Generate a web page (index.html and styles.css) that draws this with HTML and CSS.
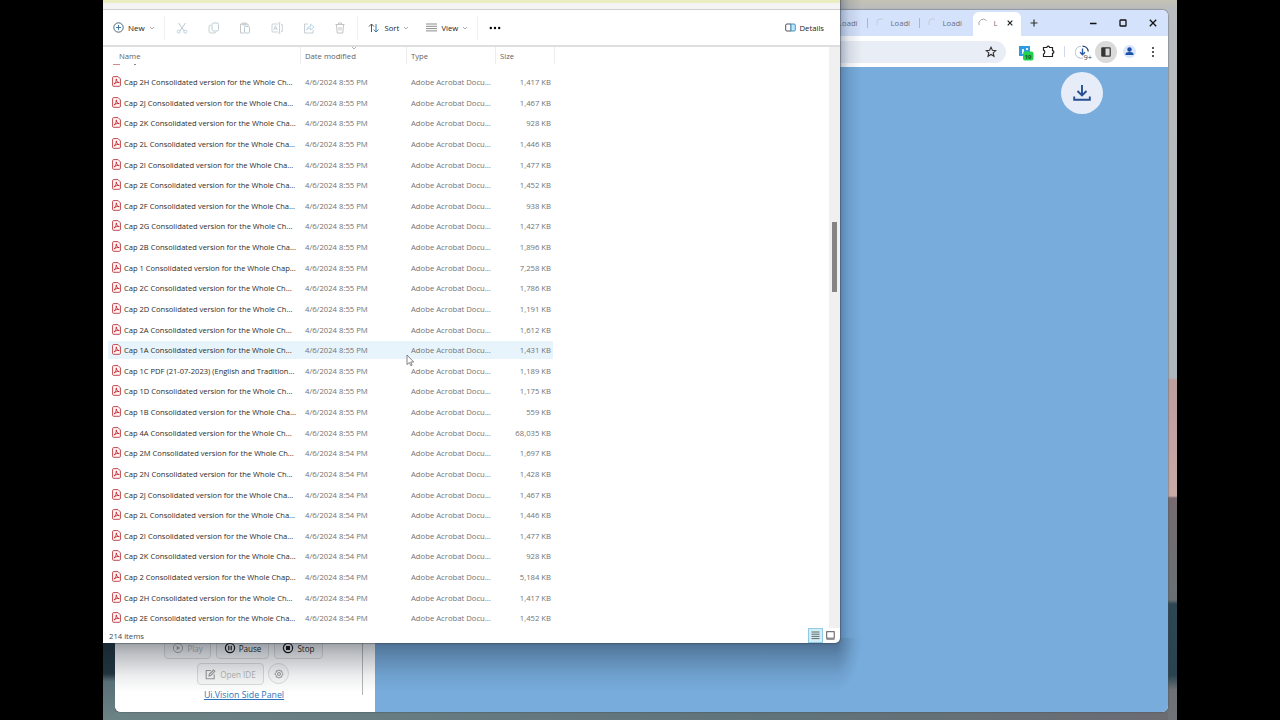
FILE: index.html
```html
<!DOCTYPE html>
<html lang="en">
<head>
  <meta charset="utf-8">
  <title>Downloads</title>
  <link rel="stylesheet" href="styles.css">
</head>
<body>
<svg class="defs" width="0" height="0">
  <symbol id="pdf" viewBox="0 0 9 11">
    <path d="M1.6.6h4.5L8.4 2.9v6.4q0 1-1 1H1.6q-1 0-1-1V1.6q0-1 1-1z" fill="#fff5f5" stroke="#bd4a50"/>
    <path d="M2.2 8C3.6 6.6 4.4 4.6 4.3 2.9 4.5 5 5.4 6.4 7.2 6.6 5.2 6.2 3.6 6.8 2.2 8z" fill="none" stroke="#c3242c" stroke-width=".9"/>
  </symbol>
  <symbol id="chev" viewBox="0 0 6 4"><path d="M1 1l2 2 2-2" fill="none" stroke="#999" stroke-width=".8"/></symbol>
  <symbol id="spin" viewBox="0 0 10 10"><path d="M1 7V4q0-3 3-3h3" fill="none" stroke="#c3cbdc"/></symbol>
</svg>
<div class="desktop">
  <div class="browser">
    <div class="tabs">
      <div class="tab first"><span>Loadi</span></div>
      <div class="tab"><svg width="10" height="10"><use href="#spin"/></svg><span>Loadi</span></div>
      <div class="tab"><svg width="10" height="10"><use href="#spin"/></svg><span>Loadi</span></div>
      <div class="tab active">
        <svg width="10" height="10" viewBox="0 0 10 10"><path d="M1 7A4.5 4.5 0 0 1 8.500 2.500" fill="none" stroke="#aaa"/></svg>
        <span>L</span>
        <svg class="close" width="6" height="6" viewBox="0 0 6 6"><path d="M.7.7l4.600 4.600M5.300.7L.7 5.300" stroke="#222" stroke-width="1.200"/></svg>
      </div>
      <svg class="plus" width="8" height="8" viewBox="0 0 8 8"><path d="M4 .5v7M.5 4h7" stroke="#333" stroke-width="1.200"/></svg>
      <div class="winctl">
        <svg width="8" height="8" viewBox="0 0 8 8"><path d="M1 4.500h6.500" stroke="#111" stroke-width="1.300"/></svg>
        <svg width="8" height="8" viewBox="0 0 8 8"><rect x="1" y="1" width="6" height="6" rx=".6" fill="none" stroke="#111" stroke-width="1.300"/></svg>
        <svg width="8" height="8" viewBox="0 0 8 8"><path d="M.8.8l6.400 6.400M7.200.8L.8 7.200" stroke="#111" stroke-width="1.300"/></svg>
      </div>
    </div>
    <div class="toolbar">
      <div class="omnibox">
        <svg width="12" height="12" viewBox="0 0 12 12"><path d="M6 1.200l1.400 3.100 3.400.3-2.600 2.300.8 3.400L6 8.500l-3 1.800.8-3.400L1.200 4.600l3.400-.3z" fill="none" stroke="#333" stroke-width="1.100"/></svg>
      </div>
      <svg class="ext" width="16" height="16" viewBox="0 0 16 16"><path d="M1 1h11v7H7v3H1z" fill="#2d9be3"/><path d="M4 4h2v5H4zM8 3h2v2H8z" fill="#e4f4ff"/><rect x="5" y="6.500" width="10.500" height="9" rx="2" fill="#20d34c"/><text x="6.700" y="13.500">19</text></svg>
      <svg class="puzzle" width="13" height="13" viewBox="0 0 13 13"><path d="M1.500 2.500h3.300q.2-1.300 1.400-1.300t1.400 1.300h2.900v3.100q1.400.1 1.400 1.400t-1.400 1.400v3.100h-9V9q1.300-.3 1.300-1.900T1.500 5.200z" fill="none" stroke="#222" stroke-width="1.200"/></svg>
      <i class="vline"></i>
      <svg class="dl" width="18" height="16" viewBox="0 0 18 16"><path d="M7.500 1.200a6 6 0 0 1 5.800 5.300" fill="none" stroke="#1c3d78" stroke-width="1.300"/><path d="M6 1.300A6 6 0 1 0 8 13" fill="none" stroke="#b5bfd0"/><path d="M7.500 3.500v6M5 7.200l2.500 2.500L10 7.200" fill="none" stroke="#2a5ba8" stroke-width="1.400"/><text x="8.500" y="14.800">9+</text></svg>
      <div class="side-btn"><svg width="10" height="10" viewBox="0 0 10 10"><rect x=".8" y=".8" width="8.400" height="8.400" rx=".6" fill="none" stroke="#333" stroke-width="1.200"/><path d="M1 1h3.500v8H1z" fill="#333"/></svg></div>
      <svg class="user" width="13" height="13" viewBox="0 0 13 13"><circle cx="6.500" cy="6.500" r="6.500" fill="#d9e6fb"/><circle cx="6.500" cy="4.500" r="2.200" fill="#1a50a5"/><path d="M2.500 10V9q0-2 4-2t4 2v1z" fill="#1a50a5"/></svg>
      <svg class="dots" width="4" height="12" viewBox="0 0 4 12"><g fill="#222"><circle cx="2" cy="2" r="1"/><circle cx="2" cy="6" r="1"/><circle cx="2" cy="10" r="1"/></g></svg>
    </div>
    <div class="page">
      <div class="panel">
        <div class="btns">
          <div class="btn play off"><svg width="12" height="12" viewBox="0 0 12 12"><circle cx="6" cy="6" r="4.600" fill="none" stroke="#aaa"/><path d="M4.700 3.800v4.400L8.200 6z" fill="#aaa"/></svg>Play</div>
          <div class="btn pause"><svg width="12" height="12" viewBox="0 0 12 12"><circle cx="6" cy="6" r="4.600" fill="none" stroke="#111" stroke-width="1.200"/><path d="M4.800 3.800v4.400M7.200 3.800v4.400" stroke="#111" stroke-width="1.200"/></svg>Pause</div>
          <div class="btn stop"><svg width="12" height="12" viewBox="0 0 12 12"><circle cx="6" cy="6" r="4.600" fill="none" stroke="#111" stroke-width="1.200"/><rect x="4" y="4" width="4" height="4" fill="#111"/></svg>Stop</div>
        </div>
        <div class="btns second">
          <div class="btn ide off"><svg width="11" height="11" viewBox="0 0 11 11"><path d="M6 1.500H1.200v8.300h8V5.500M4 7l.4-2L8.500 1l1.300 1.300L5.800 6.500z" fill="none" stroke="#999" stroke-width="1.100"/></svg>Open IDE</div>
          <div class="btn gear off"><svg width="10" height="10" viewBox="0 0 10 10"><path d="M5 .8l1 1.100 1.600-.1.200 1.500L9.200 5 7.800 6.700l-.2 1.500L6 8.100 5 9.200 4 8.100l-1.600.1-.2-1.500L.8 5l1.400-1.700.2-1.500L4 1.900z" fill="none" stroke="#999"/><circle cx="5" cy="5" r="1.500" fill="none" stroke="#999"/></svg></div>
        </div>
        <a class="link">Ui.Vision Side Panel</a>
        <i class="panel-scroll"></i>
      </div>
      <div class="canvas">
        <div class="dl-bubble"><svg width="20" height="20" viewBox="0 0 20 20"><path d="M10 2v10M5.500 8l4.500 4.500L14.500 8M2.200 13.500v3.300h15.600v-3.300" fill="none" stroke="#284f91" stroke-width="1.900"/></svg></div>
      </div>
    </div>
  </div>

  <div class="shade shade-right"></div>
  <div class="shade shade-bottom"></div>
  <div class="shade shade-corner"></div>
  <div class="explorer">
    <div class="titlebar"></div>
    <div class="cmdbar">
      <div class="cmd new"><svg width="11" height="11" viewBox="0 0 11 11"><circle cx="5.500" cy="5.500" r="4.700" fill="none" stroke="#4f6675"/><path d="M5.500 3v5M3 5.500h5" stroke="#3e7ba8"/></svg><span>New</span><svg width="6" height="4"><use href="#chev"/></svg></div>
      <div class="tools">
        <svg width="12" height="12" viewBox="0 0 12 12"><path d="M2.500 1l5.800 8M9.500 1L3.700 9" stroke="#bcc8ce"/><g fill="none" stroke="#b7d3df"><circle cx="2.700" cy="9.700" r="1.500"/><circle cx="9.300" cy="9.700" r="1.500"/></g></svg>
        <svg width="12" height="12" viewBox="0 0 12 12"><rect x="4" y="1" width="6.500" height="8" rx="1.500" fill="none" stroke="#bccbd5"/><path d="M3 3Q1 3 1 5v4q0 2 2 2h3q1.500 0 2-1" fill="none" stroke="#c3d0d8"/></svg>
        <svg width="12" height="12" viewBox="0 0 12 12"><path d="M5 11H1.500V2H9v2M3.500 1h3.500v2H3.500z" fill="none" stroke="#c7c7c7"/><rect x="5.500" y="4.500" width="5" height="6.500" rx=".8" fill="none" stroke="#b8ccd7"/></svg>
        <svg width="12" height="12" viewBox="0 0 12 12"><path d="M7 2H2Q1 2 1 3v6q0 1 1 1h5M8.500 1v10M7.500.8h2M7.500 11.200h2M10 2.500h1.300v7H10M2.800 8l1.700-4.200L6.200 8M3.400 6.600h2.200" fill="none" stroke="#c2cdd3" stroke-width=".9"/></svg>
        <svg width="12" height="12" viewBox="0 0 12 12"><path d="M5 2H1.500v9H10V8" fill="none" stroke="#c5ced3"/><path d="M3.500 8Q4 4.500 7.500 4.500V2L11 5.200 7.500 8V6Q5 6 3.500 8z" fill="none" stroke="#b2d3e3" stroke-width=".9"/></svg>
        <svg width="12" height="12" viewBox="0 0 12 12"><path d="M1.500 2.500h9M4.500 2.300V1h3v1.300M2.500 3l.7 8h5.600l.7-8M5 5v3.500M7 5v3.500" fill="none" stroke="#c4c4c4"/></svg>
      </div>
      <div class="cmd sort"><svg width="12" height="10" viewBox="0 0 12 10"><path d="M3.500 9V1M1 3.500L3.500 1 6 3.500" fill="none" stroke="#555"/><path d="M8 1v8M5.700 6.500L8 9l2.500-2.500" fill="none" stroke="#3a7cab"/></svg><span>Sort</span><svg width="6" height="4"><use href="#chev"/></svg></div>
      <div class="cmd view"><svg width="11" height="9" viewBox="0 0 11 9"><path d="M0 1h11M0 3.300h11M0 5.600h11M0 7.900h11" stroke="#8d8d8d"/></svg><span>View</span><svg width="6" height="4"><use href="#chev"/></svg></div>
      <svg class="more" width="12" height="4" viewBox="0 0 12 4"><circle cx="1.800" cy="2" r="1.200"/><circle cx="6" cy="2" r="1.200"/><circle cx="10.200" cy="2" r="1.200"/></svg>
      <div class="cmd details"><svg width="11" height="9" viewBox="0 0 11 9"><path d="M6 8H2Q.7 8 .7 7V2Q.7 1 2 1h4z" fill="#fff" stroke="#555"/><path d="M6 1h3q1.300 0 1.300 1v5q0 1-1.300 1H6z" fill="#bfe6fa" stroke="#3b9bd0"/></svg><span>Details</span></div>
    </div>
    <div class="body">
      <div class="list">
        <div class="head"><span>Name</span><span>Date modified<svg class="sorted" width="6" height="4"><use href="#chev"/></svg></span><span>Type</span><span>Size</span></div>
        <div class="clip"><i></i><b></b></div>
        <div class="rows">
          <div class="row"><svg><use href="#pdf"/></svg><span>Cap 2H Consolidated version for the Whole Ch...</span><span>4/6/2024 8:55 PM</span><span>Adobe Acrobat Docu...</span><span>1,417 KB</span></div>
          <div class="row"><svg><use href="#pdf"/></svg><span>Cap 2J Consolidated version for the Whole Cha...</span><span>4/6/2024 8:55 PM</span><span>Adobe Acrobat Docu...</span><span>1,467 KB</span></div>
          <div class="row"><svg><use href="#pdf"/></svg><span>Cap 2K Consolidated version for the Whole Cha...</span><span>4/6/2024 8:55 PM</span><span>Adobe Acrobat Docu...</span><span>928 KB</span></div>
          <div class="row"><svg><use href="#pdf"/></svg><span>Cap 2L Consolidated version for the Whole Cha...</span><span>4/6/2024 8:55 PM</span><span>Adobe Acrobat Docu...</span><span>1,446 KB</span></div>
          <div class="row"><svg><use href="#pdf"/></svg><span>Cap 2I Consolidated version for the Whole Cha...</span><span>4/6/2024 8:55 PM</span><span>Adobe Acrobat Docu...</span><span>1,477 KB</span></div>
          <div class="row"><svg><use href="#pdf"/></svg><span>Cap 2E Consolidated version for the Whole Cha...</span><span>4/6/2024 8:55 PM</span><span>Adobe Acrobat Docu...</span><span>1,452 KB</span></div>
          <div class="row"><svg><use href="#pdf"/></svg><span>Cap 2F Consolidated version for the Whole Cha...</span><span>4/6/2024 8:55 PM</span><span>Adobe Acrobat Docu...</span><span>938 KB</span></div>
          <div class="row"><svg><use href="#pdf"/></svg><span>Cap 2G Consolidated version for the Whole Ch...</span><span>4/6/2024 8:55 PM</span><span>Adobe Acrobat Docu...</span><span>1,427 KB</span></div>
          <div class="row"><svg><use href="#pdf"/></svg><span>Cap 2B Consolidated version for the Whole Cha...</span><span>4/6/2024 8:55 PM</span><span>Adobe Acrobat Docu...</span><span>1,896 KB</span></div>
          <div class="row"><svg><use href="#pdf"/></svg><span>Cap 1 Consolidated version for the Whole Chap...</span><span>4/6/2024 8:55 PM</span><span>Adobe Acrobat Docu...</span><span>7,258 KB</span></div>
          <div class="row"><svg><use href="#pdf"/></svg><span>Cap 2C Consolidated version for the Whole Ch...</span><span>4/6/2024 8:55 PM</span><span>Adobe Acrobat Docu...</span><span>1,786 KB</span></div>
          <div class="row"><svg><use href="#pdf"/></svg><span>Cap 2D Consolidated version for the Whole Ch...</span><span>4/6/2024 8:55 PM</span><span>Adobe Acrobat Docu...</span><span>1,191 KB</span></div>
          <div class="row"><svg><use href="#pdf"/></svg><span>Cap 2A Consolidated version for the Whole Ch...</span><span>4/6/2024 8:55 PM</span><span>Adobe Acrobat Docu...</span><span>1,612 KB</span></div>
          <div class="row hover"><svg><use href="#pdf"/></svg><span>Cap 1A Consolidated version for the Whole Ch...</span><span>4/6/2024 8:55 PM</span><span>Adobe Acrobat Docu...</span><span>1,431 KB</span></div>
          <div class="row"><svg><use href="#pdf"/></svg><span>Cap 1C PDF (21-07-2023) (English and Tradition...</span><span>4/6/2024 8:55 PM</span><span>Adobe Acrobat Docu...</span><span>1,189 KB</span></div>
          <div class="row"><svg><use href="#pdf"/></svg><span>Cap 1D Consolidated version for the Whole Ch...</span><span>4/6/2024 8:55 PM</span><span>Adobe Acrobat Docu...</span><span>1,175 KB</span></div>
          <div class="row"><svg><use href="#pdf"/></svg><span>Cap 1B Consolidated version for the Whole Cha...</span><span>4/6/2024 8:55 PM</span><span>Adobe Acrobat Docu...</span><span>559 KB</span></div>
          <div class="row"><svg><use href="#pdf"/></svg><span>Cap 4A Consolidated version for the Whole Ch...</span><span>4/6/2024 8:55 PM</span><span>Adobe Acrobat Docu...</span><span>68,035 KB</span></div>
          <div class="row"><svg><use href="#pdf"/></svg><span>Cap 2M Consolidated version for the Whole Ch...</span><span>4/6/2024 8:54 PM</span><span>Adobe Acrobat Docu...</span><span>1,697 KB</span></div>
          <div class="row"><svg><use href="#pdf"/></svg><span>Cap 2N Consolidated version for the Whole Ch...</span><span>4/6/2024 8:54 PM</span><span>Adobe Acrobat Docu...</span><span>1,428 KB</span></div>
          <div class="row"><svg><use href="#pdf"/></svg><span>Cap 2J Consolidated version for the Whole Cha...</span><span>4/6/2024 8:54 PM</span><span>Adobe Acrobat Docu...</span><span>1,467 KB</span></div>
          <div class="row"><svg><use href="#pdf"/></svg><span>Cap 2L Consolidated version for the Whole Cha...</span><span>4/6/2024 8:54 PM</span><span>Adobe Acrobat Docu...</span><span>1,446 KB</span></div>
          <div class="row"><svg><use href="#pdf"/></svg><span>Cap 2I Consolidated version for the Whole Cha...</span><span>4/6/2024 8:54 PM</span><span>Adobe Acrobat Docu...</span><span>1,477 KB</span></div>
          <div class="row"><svg><use href="#pdf"/></svg><span>Cap 2K Consolidated version for the Whole Cha...</span><span>4/6/2024 8:54 PM</span><span>Adobe Acrobat Docu...</span><span>928 KB</span></div>
          <div class="row"><svg><use href="#pdf"/></svg><span>Cap 2 Consolidated version for the Whole Chap...</span><span>4/6/2024 8:54 PM</span><span>Adobe Acrobat Docu...</span><span>5,184 KB</span></div>
          <div class="row"><svg><use href="#pdf"/></svg><span>Cap 2H Consolidated version for the Whole Ch...</span><span>4/6/2024 8:54 PM</span><span>Adobe Acrobat Docu...</span><span>1,417 KB</span></div>
          <div class="row"><svg><use href="#pdf"/></svg><span>Cap 2E Consolidated version for the Whole Cha...</span><span>4/6/2024 8:54 PM</span><span>Adobe Acrobat Docu...</span><span>1,452 KB</span></div>
        </div>
      </div>
      <div class="scroll"><div class="thumb"></div></div>
    </div>
    <div class="status">
      <span>214 items</span>
      <div class="mode on"><svg width="9" height="9" viewBox="0 0 9 9"><path d="M.5 1h8M.5 3.200h8M.5 5.400h8M.5 7.600h8" stroke="#666"/></svg></div>
      <div class="mode"><svg width="9" height="9" viewBox="0 0 9 9"><rect x=".7" y=".7" width="7.500" height="6.500" fill="#fff" stroke="#555"/><path d="M.5 8.500h8" stroke="#999"/></svg></div>
    </div>
  </div>
  <svg class="cursor" width="9" height="13" viewBox="0 0 9 13"><path d="M1 1v9.500l2.300-2 1.500 3.200 1.300-.6-1.400-3.100H7.700z" fill="#fff" stroke="#666" stroke-width=".8"/></svg>
</div>
</body>
</html>
```
FILE: styles.css
```css
* {
  box-sizing: border-box;
}
body {
  margin: 0;
  background: #000;
  font-family: "Open Sans", "Noto Sans", sans-serif;
  font-size: 7.700px;
  color: #222;
  overflow: hidden;
}
svg {
  display: block;
  flex: none;
}
.defs {
  position: absolute;
}
.desktop {
  position: relative;
  width: 1074px;
  height: 720px;
  margin-left: 103px;
  overflow: hidden;
  background: linear-gradient(#c3c2b3 0, #b9bcc0 10px, #aeb6be 378px, #bd9e9e 380px, #c8aaa7 496px, #766b70 498px, #697174 600px, #2c4753 604px, #294450 675px, #6f7176 690px, #6f7478 720px);
}
.desktop::after {
  content: "";
  position: absolute;
  left: 0;
  top: 643px;
  width: 12px;
  height: 77px;
  background: linear-gradient(#172833, #20333c 40%, #596f76 50%, #6c8386);
}
.desktop::before {
  content: "";
  position: absolute;
  left: 0;
  top: 712px;
  width: 1065px;
  height: 8px;
  background: linear-gradient(90deg, #6c8386, #5f747b 60%, #6b6c72);
}

/* browser */
.browser {
  position: absolute;
  left: 12px;
  top: 10px;
  width: 1053px;
  height: 702px;
  border-radius: 6px;
  overflow: hidden;
  background: #fff;
  box-shadow: 0 0 1px 1px rgba(70,80,90,.35);
}
.tabs {
  display: flex;
  align-items: center;
  height: 26px;
  background: #d5e2fb;
  padding-left: 723px;
  color: #687183;
}
.tab {
  display: flex;
  align-items: center;
  gap: 4.500px;
  width: 52px;
  height: 10px;
  border-left: 1px solid #abb6ca;
  padding-left: 8px;
}
.tab.first {
  width: 29px;
  border: 0;
  padding: 0;
}
.tab.active {
  width: 48px;
  height: 24px;
  margin: 2px 0 0 2px;
  padding: 0 8px 2px 5px;
  border: 0;
  border-radius: 6px 6px 0 0;
  background: #fff;
}
.tab.active span {
  margin-left: 1px;
}
.close {
  margin-left: auto;
}
.plus {
  margin-left: 9px;
}
.winctl {
  display: flex;
  gap: 22px;
  margin-left: auto;
  padding-right: 11px;
}
.toolbar {
  display: flex;
  align-items: center;
  height: 31px;
}
.omnibox {
  display: flex;
  align-items: center;
  justify-content: flex-end;
  width: 891px;
  height: 22px;
  padding-right: 9px;
  border-radius: 11px;
  background: #e9edf5;
}
.ext {
  margin: 2px 0 0 12px;
}
.ext text {
  font-size: 6px;
  font-weight: bold;
  fill: #14522a;
}
.puzzle {
  margin-left: 8px;
}
.vline {
  width: 1px;
  height: 11px;
  margin: 0 10px 0 9px;
  background: #cdd8ea;
}
.dl {
  margin-top: 2px;
}
.dl text {
  font-size: 7.500px;
  fill: #444;
}
.side-btn {
  display: flex;
  align-items: center;
  justify-content: center;
  width: 22px;
  height: 22px;
  margin-left: 2px;
  border-radius: 50%;
  background: #dadada;
}
.user {
  margin-left: 6px;
}
.dots {
  margin-left: 15px;
}
.page {
  display: flex;
  height: 645px;
}
.panel {
  position: relative;
  width: 260px;
  padding-top: 570px;
  background: #fff;
}
.btns {
  display: flex;
  gap: 5px;
  padding-left: 49px;
}
.btns.second {
  gap: 4px;
  margin-top: 4px;
  padding-left: 82px;
}
.btn {
  display: flex;
  align-items: center;
  justify-content: center;
  gap: 3px;
  height: 22px;
  border: 1px solid #dcdcdc;
  border-radius: 4px;
  background: #fafafa;
  font-size: 8.100px;
}
.btn.off {
  color: #b5b5b5;
}
.play {
  width: 47px;
}
.pause {
  width: 53px;
}
.stop {
  width: 49px;
}
.ide {
  width: 67px;
  gap: 4px;
}
.gear {
  width: 21px;
  height: 21px;
  border-radius: 50%;
}
.link {
  display: block;
  margin-top: 3px;
  padding-right: 2px;
  font-size: 8.800px;
  line-height: 14px;
  text-align: center;
  text-decoration: underline;
  color: #2b74bb;
}
.panel-scroll {
  position: absolute;
  right: 12px;
  top: 560px;
  width: 1px;
  height: 68px;
  background: #b5b5b5;
}
.canvas {
  flex: 1;
  background: #77acdc;
}
.dl-bubble {
  display: flex;
  align-items: center;
  justify-content: center;
  width: 42px;
  height: 42px;
  margin: 5px 0 0 686px;
  border-radius: 50%;
  background: #e6edf9;
}

/* shadow cast by the explorer on the browser */
.shade {
  position: absolute;
}
.shade-right {
  left: 737px;
  top: 0;
  width: 22px;
  height: 638px;
  background: linear-gradient(90deg, rgba(20,40,70,.3), rgba(20,40,70,.1) 40%, rgba(20,40,70,0));
}
.shade-bottom {
  left: 12px;
  top: 638px;
  width: 720px;
  height: 54px;
  background: linear-gradient(rgba(20,30,45,.48), rgba(20,30,45,.28) 30%, rgba(20,30,45,.08) 70%, rgba(20,30,45,0));
}
.shade-corner {
  left: 732px;
  top: 638px;
  width: 27px;
  height: 54px;
  background: radial-gradient(27px 54px at 0 0, rgba(20,30,45,.48), rgba(20,30,45,.28) 30%, rgba(20,30,45,.08) 70%, rgba(20,30,45,0));
}

/* file explorer */
.explorer {
  position: absolute;
  left: 0;
  top: 0;
  width: 737px;
  height: 643px;
  border-radius: 0 0 5px 0;
  background: #fff;
  box-shadow: 0 0 1px 1px rgba(60,70,80,.5);
}
.titlebar {
  height: 10px;
  border-top: 3px solid #e9edc0;
  border-bottom: 1px solid #cfcfcf;
  background: #f4f4f4;
}
.cmdbar {
  display: flex;
  align-items: center;
  height: 37px;
  padding: 0 16px 0 10px;
  border-bottom: 2px solid #dedede;
}
.cmd {
  display: flex;
  align-items: center;
  gap: 4px;
}
.new {
  width: 51px;
  font-size: 8px;
}
.tools {
  display: flex;
  gap: 19.700px;
  height: 24px;
  align-items: center;
  padding: 0 11px 0 11px;
  border: solid #f0f0f0;
  border-width: 0 1px;
}
.sort {
  margin-left: 10px;
  width: 58px;
}
.view {
  width: 52px;
  height: 24px;
  border-right: 1px solid #f0f0f0;
}
.more {
  margin-left: 11px;
}
.details {
  margin-left: auto;
}
.body {
  display: flex;
  height: 581px;
}
.list {
  flex: 1;
}
.head {
  display: grid;
  grid-template-columns: 186px 106px 89px 55px;
  height: 17px;
  padding-left: 16px;
  line-height: 18px;
  color: #5c6268;
}
.head span {
  position: relative;
}
.head span::after {
  content: "";
  position: absolute;
  right: 4px;
  top: 0;
  width: 1px;
  height: 17px;
  background: #ececec;
}
.head span:last-child::after {
  right: 0;
}
.sorted {
  position: absolute;
  left: 46px;
  top: -1px;
}
/* last pixel of the row scrolled under the header */
.clip {
  display: flex;
  height: 7.800px;
  padding-left: 10px;
}
.clip i {
  width: 7px;
  height: 1px;
  background: #d58a8e;
}
.clip b {
  width: 2px;
  height: 1px;
  margin-left: 14px;
  background: #888;
}
.row {
  display: grid;
  grid-template-columns: 12.500px 181px 106px 89px 51px;
  align-items: center;
  height: 20.635px;
  padding-left: 8.500px;
  white-space: nowrap;
  font-size: 7.700px;
  color: #747474;
}
.row svg {
  width: 9px;
  height: 11px;
  margin-top: -1px;
}
.row span:nth-child(2) {
  font-size: 7.550px;
  color: #2c2c2c;
}
.row span:last-child {
  text-align: right;
}
.hover {
  width: 445px;
  margin-left: 5px;
  padding-left: 3.500px;
  background: linear-gradient(#fff 1px, #e8f4fc 1px, #e8f4fc 19px, #fff 19px);
}
.scroll {
  width: 11px;
  padding: 175px 0 0 3px;
  background: #f0f0f0;
}
.thumb {
  width: 5px;
  height: 70px;
  background: #858585;
}
.status {
  display: flex;
  align-items: center;
  height: 15px;
  padding: 0 2px 0 6px;
  color: #3a4a56;
}
.status span {
  flex: 1;
}
.mode {
  display: flex;
  align-items: center;
  justify-content: center;
  width: 15px;
  height: 15px;
}
.mode.on {
  border: 1px solid #8ccbe2;
  background: #d3eef8;
}
.cursor {
  position: absolute;
  left: 303px;
  top: 354px;
}
```
